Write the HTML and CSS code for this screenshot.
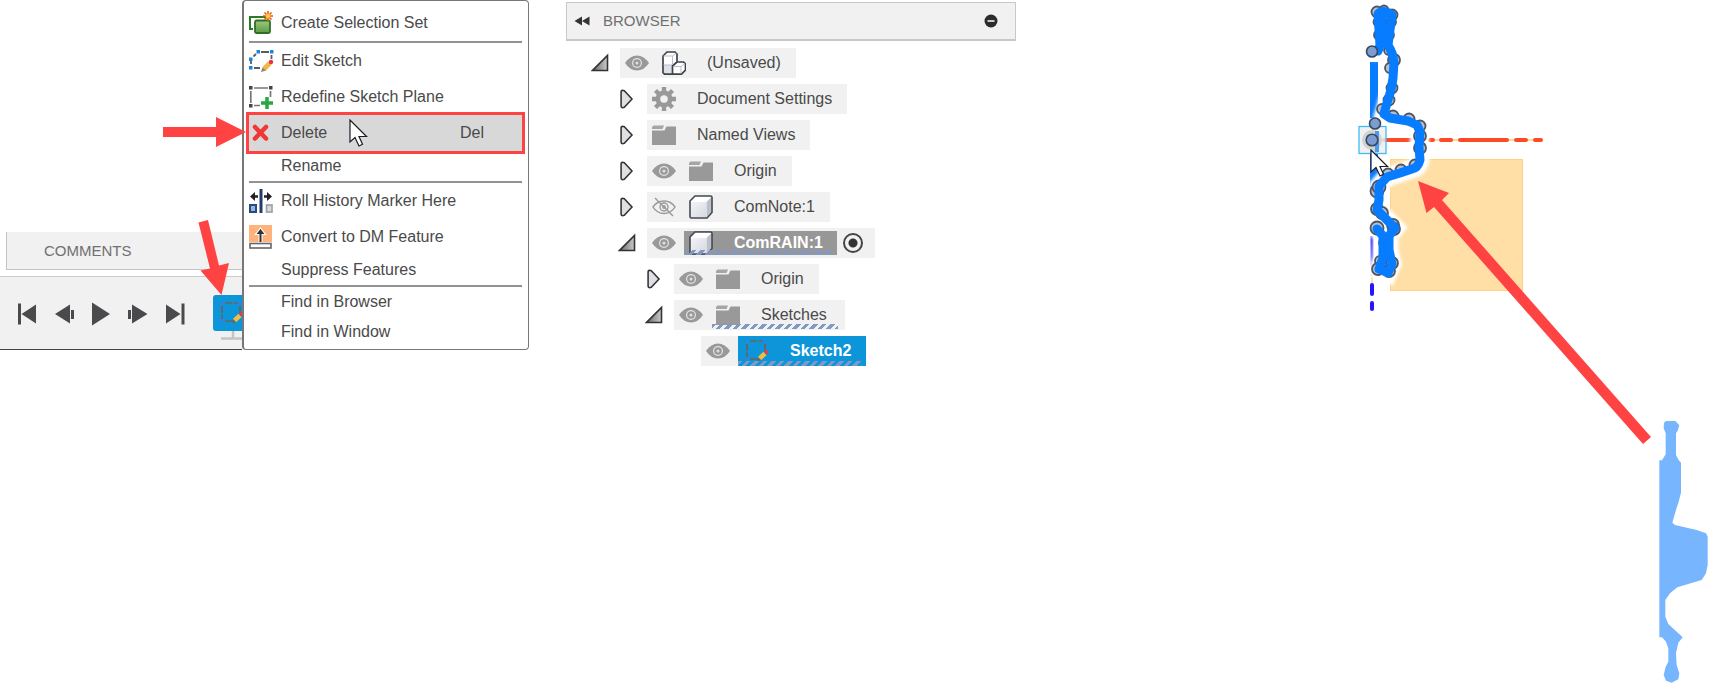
FILE: index.html
```html
<!DOCTYPE html>
<html lang="en">
<head>
<meta charset="utf-8">
<title>Sketch browser</title>
<link rel="stylesheet" href="styles.css">
</head>
<body>
<svg class="defs" aria-hidden="true">
  <defs>
    <linearGradient id="tri" x1="0" y1="0" x2="1" y2="0"><stop offset="0" stop-color="#666"/><stop offset="1" stop-color="#ccc"/></linearGradient>
    <linearGradient id="green" x1="0" y1="0" x2="0" y2="1"><stop offset="0" stop-color="#9dc97f"/><stop offset="1" stop-color="#5d9a45"/></linearGradient>
    <linearGradient id="face" x1="0" y1="0" x2="1" y2="1"><stop offset="0" stop-color="#f4f5fa"/><stop offset="1" stop-color="#d5d8e0"/></linearGradient>
  </defs>
  <symbol id="open" viewBox="0 0 18 18"><path d="M1.500 16.500H16.500V1.500Z" fill="url(#tri)" stroke="#333" stroke-width="1.600"/></symbol>
  <symbol id="closed" viewBox="0 0 16 22"><path d="M1.500 3Q1.500 1.500 3 1.500L5 2L13.500 11L5 20L3 20.500Q1.500 20.500 1.500 19Z" fill="#dfe0e4" stroke="#333" stroke-width="1.700"/></symbol>
  <symbol id="eye" viewBox="0 0 24 24"><path d="M0 12Q5 4.500 12 4.500T24 12Q19 19.500 12 19.500T0 12Z" fill="#999"/><circle cx="12" cy="12" r="5" fill="#e4e4e4"/><circle cx="12" cy="12" r="3.800" fill="#999"/><circle cx="12" cy="12" r="1.500" fill="#e0e0e0"/></symbol>
  <symbol id="eyeoff" viewBox="0 0 24 24"><g fill="none" stroke="#999" stroke-width="1.400"><path d="M1 12Q5 6 12 6T23 12Q19 18.500 12 18.500T1 12Z"/><circle cx="12" cy="12" r="4"/><circle cx="12" cy="12" r="1.200"/><path d="M3 3L21 21"/></g></symbol>
  <symbol id="folder" viewBox="0 0 24 24"><path d="M0 7.500H12.500L14.500 3.500H24V22H0Z" fill="#999"/><path d="M1.500 2.500H12L10.500 6H0V4Z" fill="#a5a5a5"/></symbol>
  <symbol id="gear" viewBox="0 0 24 24"><g stroke="#999" stroke-width="4.400"><path d="M12 0V24M0 12H24M3.500 3.500L20.500 20.500M20.500 3.500L3.500 20.500"/></g><circle cx="12" cy="12" r="8.500" fill="#999"/><circle cx="12" cy="12" r="3.800" fill="#f1f1f1"/></symbol>
  <symbol id="cube" viewBox="0 0 24 24"><path d="M1 6L6 1H21.500Q23 1 23 2.500V17.500L18 23H2.500Q1 23 1 21.500Z" fill="#fff"/><path d="M1.500 7H17V22.500H2Z" fill="url(#face)"/><path d="M17.500 7L22.500 2V17L17.500 22.500Z" fill="#bcc0c9"/><path d="M1 6L6 1H21.500Q23 1 23 2.500V17.500L18 23H2.500Q1 23 1 21.500Z" fill="none" stroke="#444850" stroke-width="1.600"/></symbol>
  <symbol id="asm" viewBox="0 0 24 24"><path d="M1 5L5 1H13L15 3V11H21.500L23.500 13V19L19.500 23.200H2.500L1 21.700Z" fill="#fff"/><path d="M1.500 14H10V22H2Z" fill="#dfe1e9"/><path d="M1 5L5 1H13L15 3V11H21.500L23.500 13V19L19.500 23.200H2.500L1 21.700Z M15 11L10.500 15V23" fill="none" stroke="#3f4248" stroke-width="1.700"/><path d="M11 15.500H19V22.500M19 15.500L23 12.500M10.500 5V14M1.500 5H10.500L14.500 2M1.500 14H10" fill="none" stroke="#b9bdc8"/></symbol>
  <symbol id="sketch" viewBox="0 0 24 24"><path d="M5 2H18M2 5V18M20 5V13M5 20H12" fill="none" stroke="#70615c" stroke-width="1.700" stroke-dasharray="7 1.500"/><g fill="#2d83e8"><rect x="1" y="1" width="3" height="3"/><rect x="18.500" y="1" width="3" height="3"/><rect x="1" y="18" width="3" height="3"/></g><path d="M14.500 19.500L20 14.500" stroke="#f4bc42" stroke-width="4.500"/><circle cx="21.500" cy="13" r="2" fill="#e73b4b"/><path d="M12 22L13 18.500L16 21Z" fill="#6b6258"/></symbol>
  <symbol id="cursor" viewBox="0 0 19 28"><path d="M1 1V23L6 18.500L10 27L13.500 25.300L10 17.500H17.500Z" fill="#fff" stroke="#1c1c28" stroke-width="1.200"/></symbol>
</svg>

<main class="page">
  <section class="workspace">
    <div class="dock">
      <header class="comments">COMMENTS</header>
      <div class="timeline">
        <button class="step" aria-label="Go to start"><svg width="20" height="24"><path d="M1 1.500H4V22.500H1ZM19 2.500V21.500L4.500 12Z"/></svg></button>
        <button class="step" aria-label="Step back"><svg width="20" height="24"><path d="M16 2.500V21.500L1 12ZM17 8H20V17H17Z"/></svg></button>
        <button class="step" aria-label="Play"><svg width="20" height="24"><path d="M1 .5V23.500L19 12Z"/></svg></button>
        <button class="step" aria-label="Step forward"><svg width="20" height="24"><path d="M4 2.500V21.500L19.500 12ZM0 8H3V17H0Z"/></svg></button>
        <button class="step" aria-label="Go to end"><svg width="20" height="24"><path d="M1 2.500V21.500L15.500 12ZM16.500 1.500H19.500V22.500H16.500Z"/></svg></button>
        <div class="marker">
          <button class="feature" aria-label="Sketch feature"><svg class="icon"><use href="#sketch"/></svg></button>
          <svg class="stand" width="24" height="10"><path d="M12 0V7M0 7.500H24" fill="none" stroke="#c4c4c4" stroke-width="2.500"/></svg>
        </div>
      </div>
    </div>

    <div class="menu" role="menu">
      <button class="item" role="menuitem"><svg class="icon" viewBox="0 0 24 24"><path d="M4 18H1V6H17" fill="none" stroke="#2c7a22" stroke-width="2"/><rect x="6" y="9.500" width="15" height="12.500" rx="1.500" fill="url(#green)" stroke="#2f6f25" stroke-width="1.800"/><path d="M19 0V10M14 5H24M15.500 1.500L22.500 8.500M22.500 1.500L15.500 8.500" stroke="#e8590c" stroke-width="1.600"/><circle cx="19" cy="5" r="2.300" fill="#ffc83d"/></svg><span>Create Selection Set</span></button>
      <hr class="rule">
      <button class="item" role="menuitem"><svg class="icon" viewBox="0 0 24 24"><path d="M12 3H20M22.500 6V10M2 12V15M5 19H11M4.500 7.500L7 5" fill="none" stroke="#5c5c5c" stroke-width="1.800"/><g fill="#1787e0"><rect x="7.500" y="1" width="3.500" height="3.500"/><rect x="21" y="1" width="3.500" height="3.500"/><rect x="0" y="8.500" width="3.500" height="3.500"/><rect x="0" y="17" width="3.500" height="3.500"/></g><path d="M15 20L21 14" stroke="#f3b64a" stroke-width="5"/><circle cx="22" cy="13" r="2.200" fill="#e8324a"/><path d="M12 23L13.500 18.500L17 21.500Z" fill="#8b8175"/></svg><span>Edit Sketch</span></button>
      <button class="item" role="menuitem"><svg class="icon" viewBox="0 0 24 24"><path d="M5 3H19M1.800 6V18M21.500 6V12M5 20.500H11" fill="none" stroke="#777" stroke-width="1.700"/><g fill="#444"><rect x="0" y="1" width="3.500" height="3.500"/><rect x="20" y="1" width="3.500" height="3.500"/><rect x="0" y="19" width="3.500" height="3.500"/></g><path d="M18 12V24M12 18H24" stroke="#27a844" stroke-width="3.500"/></svg><span>Redefine Sketch Plane</span></button>
      <button class="item active" role="menuitem"><svg class="icon" viewBox="0 0 24 24"><path d="M6 6L17 17.500M17 6L6 17.500" stroke="#f23535" stroke-width="4.500" stroke-linecap="round"/></svg><span>Delete</span><kbd class="key">Del</kbd></button>
      <button class="item short" role="menuitem"><span class="icon"></span><span>Rename</span></button>
      <hr class="rule">
      <button class="item" role="menuitem"><svg class="icon" viewBox="0 0 24 24"><path d="M12 0V24" stroke="#203c68" stroke-width="3"/><path d="M1 7.500L6 3V12ZM23 7.500L18 3V12Z" fill="#222"/><path d="M4 7.500H9M15 7.500H20" stroke="#222" stroke-width="2.500"/><rect x="1" y="16" width="6" height="7" fill="#8fb8e4" stroke="#294a7c" stroke-width="2"/><rect x="17.500" y="16" width="5.500" height="7" fill="#d6d9dd" stroke="#a2a2a2" stroke-width="1.700"/></svg><span>Roll History Marker Here</span></button>
      <button class="item" role="menuitem"><svg class="icon" viewBox="0 0 24 24"><rect width="23" height="17" fill="#ffb27c"/><path d="M11.500 17V7" stroke="#fff" stroke-width="4"/><path d="M11.500 3L16.500 9.500H6.500Z" fill="#333" stroke="#fff" stroke-width="1.200"/><path d="M11.500 17V7" stroke="#333" stroke-width="2"/><rect x="1" y="18.500" width="21" height="4.500" fill="#fff" stroke="#666" stroke-width="1.600"/></svg><span>Convert to DM Feature</span></button>
      <button class="item short" role="menuitem"><span class="icon"></span><span>Suppress Features</span></button>
      <hr class="rule">
      <button class="item short" role="menuitem"><span class="icon"></span><span>Find in Browser</span></button>
      <button class="item short" role="menuitem"><span class="icon"></span><span>Find in Window</span></button>
    </div>

    <svg class="callouts" viewBox="0 0 529 350" aria-hidden="true">
      <path d="M163 127H216V117L246 132L216 147V137H163Z" fill="#ff4343"/>
      <path d="M198.500 222.500L208 220L219 265.500L229 263L221.500 295L200.500 270.500L210 268.500Z" fill="#ff4343"/>
      <use href="#cursor" x="349" y="119" width="19" height="28"/>
    </svg>
  </section>

  <section class="browser">
    <header class="head">
      <button class="plain" aria-label="Collapse"><svg width="16" height="10"><path d="M8 .5V9.500L.5 5ZM15.500 .5V9.500L8 5Z" fill="#333"/></svg></button>
      <span class="title">BROWSER</span>
      <button class="plain" aria-label="Hide"><svg width="14" height="14"><circle cx="7" cy="7" r="6.500" fill="#2c2c2c"/><path d="M3.500 7H10.500" stroke="#ddd" stroke-width="1.800"/></svg></button>
    </header>
    <ul class="tree">
      <li class="row"><svg class="toggle"><use href="#open"/></svg><div class="chip"><svg class="icon"><use href="#eye"/></svg><svg class="icon"><use href="#asm"/></svg><span class="label">(Unsaved)</span></div></li>
      <li class="row l1"><svg class="toggle"><use href="#closed"/></svg><div class="chip"><svg class="icon"><use href="#gear"/></svg><span class="label">Document Settings</span></div></li>
      <li class="row l1"><svg class="toggle"><use href="#closed"/></svg><div class="chip"><svg class="icon"><use href="#folder"/></svg><span class="label">Named Views</span></div></li>
      <li class="row l1"><svg class="toggle"><use href="#closed"/></svg><div class="chip"><svg class="icon"><use href="#eye"/></svg><svg class="icon"><use href="#folder"/></svg><span class="label">Origin</span></div></li>
      <li class="row l1"><svg class="toggle"><use href="#closed"/></svg><div class="chip"><svg class="icon"><use href="#eyeoff"/></svg><svg class="icon"><use href="#cube"/></svg><span class="label">ComNote:1</span></div></li>
      <li class="row l1"><svg class="toggle"><use href="#open"/></svg><div class="chip"><svg class="icon"><use href="#eye"/></svg><div class="tag grey hatch"><svg class="icon"><use href="#cube"/></svg><span class="label">ComRAIN:1</span></div><input class="radio" type="radio" name="active" aria-label="Activate ComRAIN:1" checked></div></li>
      <li class="row l2"><svg class="toggle"><use href="#closed"/></svg><div class="chip"><svg class="icon"><use href="#eye"/></svg><svg class="icon"><use href="#folder"/></svg><span class="label">Origin</span></div></li>
      <li class="row l2"><svg class="toggle"><use href="#open"/></svg><div class="chip"><svg class="icon"><use href="#eye"/></svg><div class="tag clear hatch"><svg class="icon"><use href="#folder"/></svg><span class="label">Sketches</span></div></div></li>
      <li class="row l3"><span class="toggle"></span><div class="chip"><svg class="icon"><use href="#eye"/></svg><div class="tag blue hatch"><svg class="icon"><use href="#sketch"/></svg><span class="label">Sketch2</span></div></div></li>
    </ul>
  </section>

  <svg class="canvas" viewBox="1350 0 360 683" role="img" aria-label="Sketch profile on the canvas">
    <defs>
      <filter id="halo" x="-30%" y="-10%" width="160%" height="120%"><feGaussianBlur stdDeviation="1.500"/></filter>
      <linearGradient id="axis" gradientUnits="userSpaceOnUse" x1="0" y1="233" x2="0" y2="278"><stop offset="0" stop-color="#2a24ff"/><stop offset="1" stop-color="#c9c2ff"/></linearGradient>
      <linearGradient id="fade" gradientUnits="userSpaceOnUse" x1="0" y1="140" x2="0" y2="220"><stop offset="0" stop-color="#087cff"/><stop offset=".5" stop-color="#087cff"/><stop offset=".8" stop-color="#fff"/></linearGradient>
      <path id="profile" d="M1372 51L1378 51L1380 45L1379 30L1378 14Q1383 9 1392 15L1390 30L1388 45L1392 53L1394 62L1393 78L1391 90L1387 103L1384 114L1390 118L1408 121L1417 125L1420 132L1419 147L1420 160Q1418 168 1412 169L1400 173L1387 177L1379 186L1379 200L1377 210L1383 216L1395 228L1389 236L1389 250L1392 264L1388 273L1379 269L1383 258L1383 236L1377 229"/>
    </defs>
    <rect x="1390.500" y="159.500" width="132" height="131" fill="#ffdfa6" stroke="#ffd084"/>
    <path d="M1384 140H1541" stroke="#ffb04a" stroke-width="1"/>
    <path d="M1384 140H1410M1430 140H1433M1441 140H1451M1460 140H1507M1516 140H1526M1535 140H1541" stroke="#ff4a25" stroke-width="4" stroke-linecap="round"/>
    <path d="M1372 236L1372.100 276" stroke="url(#axis)" stroke-width="3"/>
    <path d="M1372 277V284" stroke="#ffc16b"/>
    <path d="M1372 285V294M1372 303V309" stroke="#2417ff" stroke-width="4" stroke-linecap="round"/>
    <path d="M1374 62V118" stroke="#087cff" stroke-width="8"/>
    <path d="M1374 146L1374.100 220" stroke="url(#fade)" stroke-width="8"/>
    <use href="#profile" fill="none" stroke="#fff" stroke-width="19" filter="url(#halo)"/>
    <g fill="#b4bfd2" stroke="#4d5663" stroke-width="1.800">
      <circle cx="1377" cy="12" r="5.500"/><circle cx="1384" cy="10" r="4.500"/><circle cx="1392" cy="15" r="5.500"/><circle cx="1391" cy="22" r="5"/><circle cx="1378" cy="22" r="4.500"/><circle cx="1379" cy="35" r="5"/><circle cx="1389" cy="35" r="5"/><circle cx="1389" cy="50" r="5"/><circle cx="1394" cy="60" r="6"/><circle cx="1390" cy="68" r="5"/><circle cx="1392" cy="88" r="5.500"/><circle cx="1389" cy="100" r="5.500"/><circle cx="1382" cy="109" r="5"/><circle cx="1393" cy="116" r="5.500"/><circle cx="1409" cy="119" r="5.500"/><circle cx="1420" cy="126" r="5.500"/><circle cx="1420" cy="136" r="6"/><circle cx="1420" cy="148" r="6"/><circle cx="1415" cy="165" r="5.500"/><circle cx="1401" cy="170" r="5.500"/><circle cx="1388" cy="174" r="5.500"/><circle cx="1377" cy="191" r="6.500"/><circle cx="1379" cy="187" r="6.500"/><circle cx="1377" cy="209" r="6"/><circle cx="1382" cy="213" r="6"/><circle cx="1377" cy="228" r="6.500"/><circle cx="1393" cy="225" r="6"/><circle cx="1394" cy="229" r="6"/><circle cx="1384" cy="243" r="5"/><circle cx="1380" cy="261" r="5"/><circle cx="1378" cy="269" r="6"/><circle cx="1392" cy="263" r="6"/><circle cx="1389" cy="271" r="6"/>
    </g>
    <use href="#profile" fill="none" stroke="#087cff" stroke-width="9" stroke-linejoin="round" stroke-linecap="round"/>
    <path d="M1384 16V40M1386 236V255" stroke="#087cff" stroke-width="5"/>
    <rect x="1359" y="126.500" width="27" height="27" fill="#eee" fill-opacity=".8" stroke="#3dbdf5" stroke-width="1.300"/>
    <circle cx="1372" cy="140" r="10" fill="#d2d2d2"/>
    <path d="M1377 131V152" stroke="#4b9bef" stroke-width="4"/>
    <g fill="#7c9dd2" stroke="#39465c" stroke-width="1.600"><circle cx="1372" cy="51.500" r="5.500"/><circle cx="1375" cy="123.500" r="5.500"/><circle cx="1372" cy="140" r="5.800"/></g>
    <use href="#cursor" x="1370" y="149" width="19" height="28"/>
    <path d="M1418 181L1449 193L1442 200L1651 437L1643 444L1434 207L1426.500 213Z" fill="#ff4343"/>
    <path transform="translate(1600 400) scale(.33333)" fill="#78b5ff" d="M192 68L198 63H226L238 76L233 92L228 100V165L236 180L243 188V278L236 305L228 330L217 368L225 375L290 390L318 400L323 410V495L318 520L305 540L232 562L210 580L196 600V650L205 672L235 700L248 712L235 728L228 760L230 795L238 820L235 838L215 848L198 842L191 825L197 800L205 785V745L198 725L186 712H178V181H186L197 163V100L191 85Z"/>
  </svg>
</main>
</body>
</html>
```
FILE: styles.css
```css
* { box-sizing: border-box; }
body {
  margin: 0;
  background: #fff;
  color: #4a4a4a;
  font: 16px/20px "Liberation Sans", Arial, sans-serif;
}
button {
  margin: 0;
  padding: 0;
  border: 0;
  background: none;
  color: inherit;
  font: inherit;
}
svg { display: block; flex: none; }
.defs { position: absolute; width: 0; height: 0; }
.icon { flex: none; width: 24px; height: 24px; overflow: visible; }
.page { display: flex; align-items: flex-start; }

/* Timeline and context menu */
.workspace { position: relative; display: flex; flex: none; align-items: flex-end; }
.callouts { position: absolute; inset: 0; width: 100%; height: 100%; pointer-events: none; }
.dock { width: 242px; overflow: hidden; }
.comments {
  margin: 0 0 6px 6px;
  padding: 9px 37px 8px;
  border-left: 1px solid #c4c4c4;
  border-bottom: 1px solid #c4c4c4;
  background: #f1f1f1;
  color: #707070;
  font-size: 15px;
}
.timeline {
  display: flex;
  align-items: flex-start;
  padding: 18px 0 8px 8px;
  border-top: 1px solid #ccc;
  border-bottom: 1px solid #444;
  background: #f1f1f1;
}
.step { display: grid; flex: none; place-items: center; width: 37px; height: 38px; fill: #4a4a4c; }
.marker { flex: none; width: 38px; margin-left: 20px; }
.feature { display: grid; place-items: center; width: 38px; height: 36px; border-radius: 3px; background: #0c95d9; }
.stand { margin-left: 8px; }
.menu {
  width: 287px;
  padding: 4px 0 2px;
  border: 1px solid #777;
  border-left-width: 2px;
  border-radius: 4px;
  background: #fff;
}
.item {
  display: flex;
  align-items: center;
  gap: 8px;
  width: calc(100% - 11px);
  height: 36px;
  margin: 0 5px;
  text-align: left;
  white-space: nowrap;
}
.short { height: 30px; }
.active { background: #d8d8d8; outline: 3px solid #ff4343; }
.key { margin: 0 38px 0 auto; font: inherit; }
.rule { height: 2px; margin: 0 6px 0 5px; border: 0; background: #929292; }

/* Browser tree */
.browser { flex: 0 1 450px; margin: 2px 0 0 37px; }
.head {
  display: flex;
  align-items: center;
  gap: 13px;
  padding: 8px 17px 8px 7px;
  border: 1px solid #c8c8c8;
  border-bottom-width: 2px;
  background: #f1f1f1;
  color: #707070;
  font-size: 15px;
}
.title { flex: 1; }
.tree { display: grid; gap: 6px; margin: 7px 0 0; padding: 0; list-style: none; }
.row { display: flex; align-items: center; gap: 11px; padding-left: 25px; }
.l1 { padding-left: 52px; }
.l2 { padding-left: 79px; }
.l3 { padding-left: 106px; }
.toggle { width: 18px; height: 20px; }
.chip {
  display: flex;
  align-items: center;
  gap: 13px;
  height: 30px;
  padding: 0 15px 0 5px;
  background: #f1f1f1;
  white-space: nowrap;
}
.label { margin-left: 8px; }
.tag { position: relative; display: flex; align-items: center; gap: 13px; }
.grey { height: 24px; margin-left: -5px; padding: 0 14px 0 5px; background: #979797; color: #fff; font-weight: bold; }
.clear { height: 28px; margin: 0 -12px 0 -4px; padding: 0 15px 0 4px; }
.blue { height: 30px; margin: 0 -15px 0 -5px; padding: 0 15px 0 7px; background: #0c95d9; color: #fff; font-weight: bold; }
.hatch::after {
  content: "";
  position: absolute;
  inset: auto 4px 0 0;
  height: 5px;
  background: repeating-linear-gradient(135deg, #8298c4 0 3px, transparent 3px 6px);
}
.radio {
  appearance: none;
  width: 20px;
  height: 20px;
  margin: 0 -3px 0 -7px;
  border: 2px solid #444;
  border-radius: 50%;
  background: radial-gradient(circle, #333 4px, #f1f1f1 5px);
}

/* Drawing area */
.canvas { width: 360px; height: auto; margin-left: auto; }
```
